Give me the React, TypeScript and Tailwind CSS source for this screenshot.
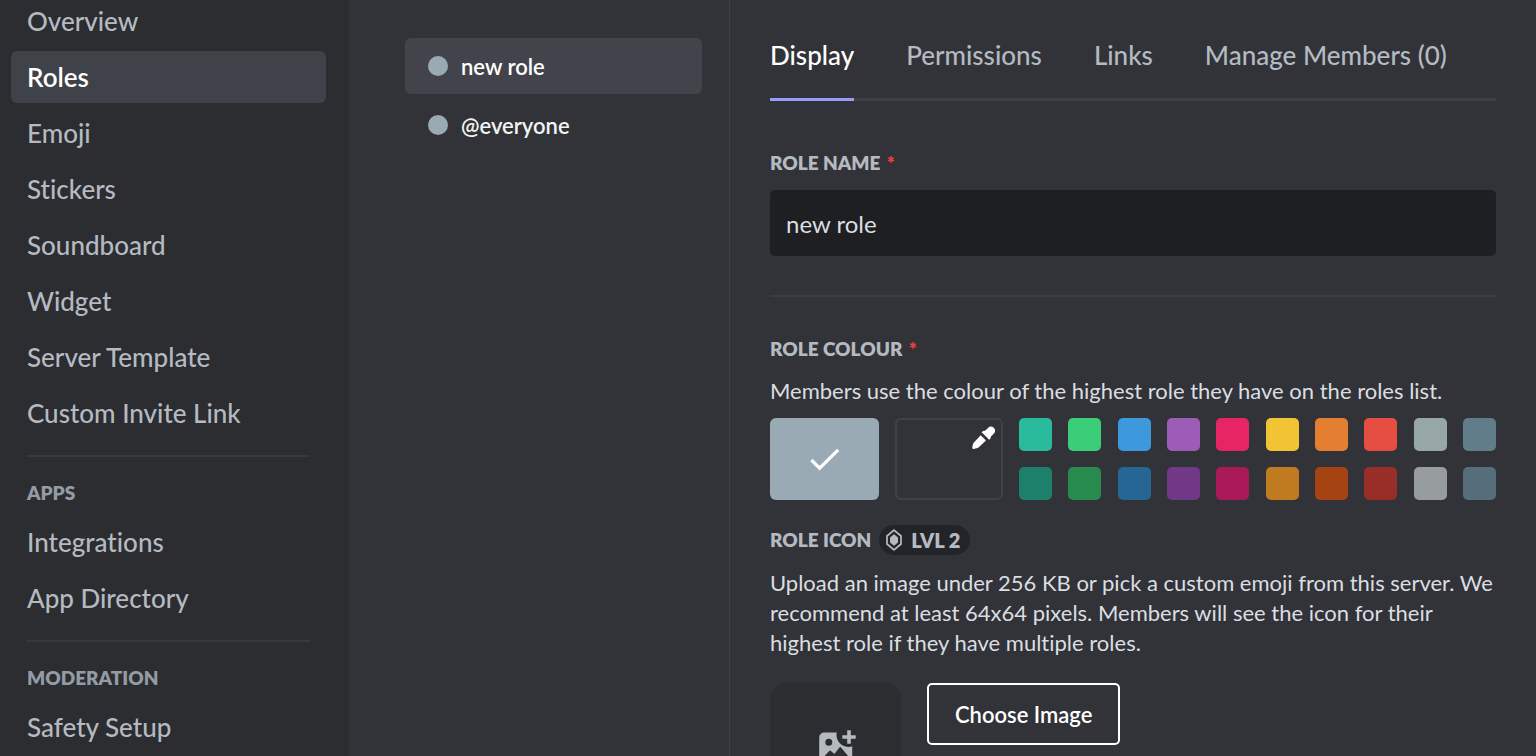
type NavGroup = { title?: string; items: string[] };

const navGroups: NavGroup[] = [
  {
    items: ["Overview", "Roles", "Emoji", "Stickers", "Soundboard", "Widget", "Server Template", "Custom Invite Link"],
  },
  { title: "Apps", items: ["Integrations", "App Directory"] },
  { title: "Moderation", items: ["Safety Setup"] },
];

const roles = ["new role", "@everyone"];
const tabs = ["Display", "Permissions", "Links", "Manage Members (0)"];

const swatches: [string, string][] = [
  ["Teal", "bg-[#2abb9d]"],
  ["Green", "bg-[#3bcd77]"],
  ["Blue", "bg-[#3d99db]"],
  ["Purple", "bg-[#9d5db7]"],
  ["Pink", "bg-[#e72565]"],
  ["Yellow", "bg-[#f0c432]"],
  ["Orange", "bg-[#e47f32]"],
  ["Red", "bg-[#e64e42]"],
  ["Light grey", "bg-[#97a6a7]"],
  ["Slate", "bg-[#627d8a]"],
  ["Dark teal", "bg-[#1c806a]"],
  ["Dark green", "bg-[#278b4e]"],
  ["Dark blue", "bg-[#266694]"],
  ["Dark purple", "bg-[#713887]"],
  ["Dark pink", "bg-[#aa1a58]"],
  ["Dark yellow", "bg-[#c07b21]"],
  ["Dark orange", "bg-[#a64313]"],
  ["Dark red", "bg-[#982e27]"],
  ["Grey", "bg-[#979c9f]"],
  ["Dark slate", "bg-[#566e7a]"],
];

function CheckIcon() {
  return (
    <svg viewBox="0 0 40 40" className="size-10" fill="none" stroke="white" strokeWidth="3.2" aria-hidden="true">
      <path d="M6.4 21 14.6 29.2 33.2 10.8" />
    </svg>
  );
}

function DropperIcon() {
  return (
    <svg viewBox="0 0 24 24" className="size-6" fill="white" aria-hidden="true">
      <path d="M15.7 3.2 17 1.9A4 4 0 0 1 22.8 7.6L21 9.5C20.200 10.300 19.700 10.600 19.700 11.200C19.800 11.800 19.500 12.500 19 13L18.200 13.800L10.600 6.300L11.500 5.400C12.100 4.800 12.800 4.700 13.400 4.800C14.100 4.900 14.800 4.100 15.700 3.200Z" />
      <path d="M9.700 9.200 15 14.500 7.800 21.300C6.800 22.200 5.200 22.400 2.700 23C1.700 23.200 1.100 22.600 1.300 21.600C1.800 19.100 2 17.600 2.900 16.600Z" />
    </svg>
  );
}

function BoostIcon() {
  return (
    <svg viewBox="0 0 18 24" className="h-6 w-[18px]" aria-hidden="true">
      <path d="M9 2.200 16 8v8L9 21.800 2 16V8Z" fill="none" stroke="currentColor" strokeWidth="1.7" />
      <path d="M9 6.200 13 9.600v4.800L9 17.800l-4-3.400V9.600Z" fill="currentColor" />
    </svg>
  );
}

function ImagePlusIcon() {
  return (
    <svg viewBox="-1.2 1.5 38 38" className="size-[38px] overflow-visible" fill="currentColor" aria-hidden="true">
      <path
        fillRule="evenodd"
        d="M6 4h12.600a11.800 11.800 0 0 0 11.500 14.400 11 11 0 0 0 3.900-.6V31a5 5 0 0 1-5 5H6a5 5 0 0 1-5-5V9a5 5 0 0 1 5-5Zm4.600 6.300a3.500 3.500 0 1 0 0 7 3.500 3.500 0 0 0 0-7ZM5 31h25v-3.400l-7-8.300a1.200 1.200 0 0 0-2 0l-4.800 6.300-3.500-3.200a1.200 1.200 0 0 0-1.700.1L5 29Z"
      />
      <path d="M29 1.800h3.600v4.900h4.900v3.600h-4.900v4.900H29v-4.900h-4.900V6.700H29Z" />
    </svg>
  );
}

function Sidebar() {
  return (
    <nav
      aria-label="Server settings"
      className="flex w-[349px] shrink-0 flex-col overflow-hidden bg-[#2b2d31] pr-[23px] pl-[11px]"
    >
      <div className="-mt-[5px]">
        {navGroups.map((group, index) => (
          <section key={group.title ?? "server"}>
            {index > 0 && <hr className="mx-4 mt-4 border-t-2 border-[#37393e]" />}
            {group.title && (
              <h2 className="mt-[25px] mb-3 px-4 text-[19px] leading-[22px] font-extrabold text-[#949ba4] uppercase">
                {group.title}
              </h2>
            )}
            <ul className="flex flex-col gap-1">
              {group.items.map((item) => (
                <li key={item}>
                  <a
                    href="#"
                    aria-current={item === "Roles" ? "page" : undefined}
                    className={`flex h-[52px] items-center rounded-md px-4 text-[26px] ${
                      item === "Roles" ? "bg-[#404249] font-semibold text-white" : "font-medium text-[#b5bac1]"
                    }`}
                  >
                    {item}
                  </a>
                </li>
              ))}
            </ul>
          </section>
        ))}
      </div>
    </nav>
  );
}

function RoleList() {
  return (
    <aside className="w-[381px] shrink-0 border-r border-[#3f4147] pt-[38px] pr-[27px] pl-14">
      <ul className="flex flex-col gap-[3px]">
        {roles.map((role, index) => (
          <li key={role}>
            <button
              type="button"
              className={`flex h-14 w-full items-center gap-[13px] rounded-md px-[23px] text-[22px] font-semibold ${
                index === 0 ? "bg-[#43444b] text-white" : "text-[#f2f3f5]"
              }`}
            >
              <span className="size-5 rounded-full bg-[#99aab5]" />
              {role}
            </button>
          </li>
        ))}
      </ul>
    </aside>
  );
}

const labelStyle = "text-[19px] leading-6 font-extrabold text-[#b5bac1] uppercase";

function RoleEditor() {
  return (
    <main className="min-w-0 flex-1 overflow-hidden px-10">
      <div role="tablist" className="flex h-[101px] gap-[52px] border-b-[3px] border-[#3f4147]">
        {tabs.map((tab, index) => (
          <button
            key={tab}
            type="button"
            role="tab"
            aria-selected={index === 0}
            className={`-mb-[3px] border-b-[3px] pt-3 text-[26px] font-medium whitespace-nowrap ${
              index === 0 ? "border-[#949cf7] text-white" : "border-transparent text-[#b5bac1]"
            }`}
          >
            {tab}
          </button>
        ))}
      </div>

      <label htmlFor="role-name" className={`mt-[50px] block ${labelStyle}`}>
        Role name <span className="ml-0.5 text-[#f23f42]">*</span>
      </label>
      <input
        id="role-name"
        type="text"
        defaultValue="new role"
        className="mt-[15px] block h-[66px] w-full rounded-[5px] bg-[#1e1f22] px-4 text-[24px] text-[#dbdee1] outline-none"
      />

      <hr className="mt-[39px] border-t-2 border-[#3b3d43]" />

      <h2 className={`mt-10 ${labelStyle}`}>
        Role colour <span className="ml-0.5 text-[#f23f42]">*</span>
      </h2>
      <p className="mt-[15px] text-[22px] leading-[30px] text-[#dbdee1]">
        Members use the colour of the highest role they have on the roles list.
      </p>
      <div className="mt-3 flex gap-4">
        <button
          type="button"
          aria-label="Default colour"
          className="flex h-[82px] w-[109px] shrink-0 items-center justify-center rounded-md bg-[#99aab5]"
        >
          <CheckIcon />
        </button>
        <button
          type="button"
          aria-label="Custom colour"
          className="flex h-[82px] w-[108px] shrink-0 items-start justify-end rounded-md border-2 border-[#404248] p-1.5"
        >
          <DropperIcon />
        </button>
        <div className="grid flex-1 grid-cols-[repeat(10,33px)] content-between justify-between">
          {swatches.map(([name, color]) => (
            <button key={name} type="button" aria-label={name} className={`size-[33px] rounded-[5px] ${color}`} />
          ))}
        </div>
      </div>

      <div className="mt-[25px] flex items-center gap-2">
        <h2 className={labelStyle}>Role icon</h2>
        <span className="flex h-[30px] items-center gap-2 rounded-full bg-[#232428] pr-2.5 pl-1.5 text-[20px] font-extrabold text-[#b5bac1]">
          <BoostIcon />
          LVL 2
        </span>
      </div>
      <p className="mt-[13px] text-[22px] leading-[30px] text-[#dbdee1]">
        Upload an image under 256 KB or pick a custom emoji from this server. We recommend at least 64x64 pixels.
        Members will see the icon for their highest role if they have multiple roles.
      </p>
      <div className="mt-[25px] flex items-start gap-[26px]">
        <div className="flex size-[131px] items-center justify-center rounded-2xl bg-[#2b2d31] text-[#b5bac1]">
          <ImagePlusIcon />
        </div>
        <button
          type="button"
          className="h-[62px] rounded-[5px] border-2 border-white px-[26px] text-[22px] font-semibold text-white"
        >
          Choose Image
        </button>
      </div>
    </main>
  );
}

export default function App() {
  return (
    <div className="flex h-screen overflow-hidden bg-[#313338] font-['Lato','Noto_Sans',sans-serif] [font-variant-ligatures:none]">
      <Sidebar />
      <RoleList />
      <RoleEditor />
    </div>
  );
}
